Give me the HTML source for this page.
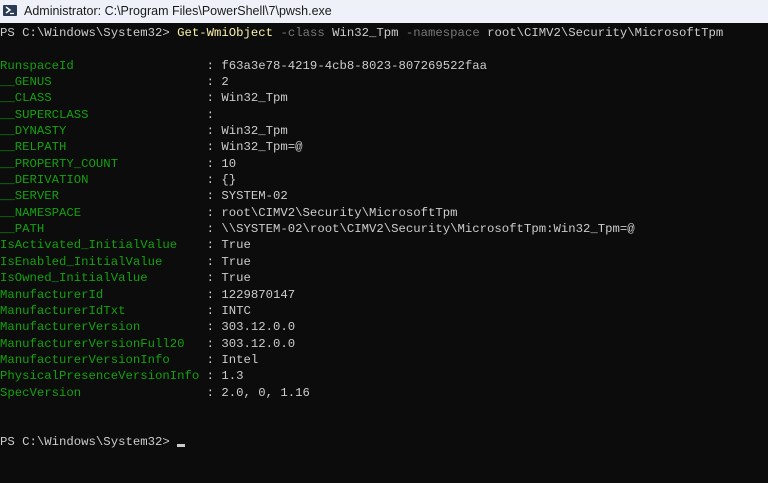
<!DOCTYPE html>
<html><head><style>
html,body{margin:0;padding:0;width:768px;height:483px;overflow:hidden;background:#0c0c0c}
.tb{position:absolute;left:0;top:0;width:768px;height:23px;background:#eef2f8;font-family:"Liberation Sans",sans-serif;font-size:12.5px;color:#1a1a1a}
.tb span{position:absolute;left:24px;top:4px}
.ic{position:absolute;left:3px;top:5px;width:14px;height:11px;background:#2b3a55;border-radius:1px}
.term{position:absolute;left:0;top:25px;font-family:"Liberation Mono",monospace;font-size:12.3px;line-height:16.35px;color:#cccccc;white-space:pre;margin:0}
.g{color:#13a10e}.y{color:#f9f1a5}.d{color:#767676}
.cur{display:inline-block;width:8px;height:3px;background:#ccc;vertical-align:-2px}
</style></head><body>
<div class="tb"><div class="ic"><svg width="14" height="11" viewBox="0 0 14 11"><path d="M3 2l4 3-4 3" stroke="#fff" stroke-width="1.5" fill="none"/><path d="M7 8.5h4" stroke="#fff" stroke-width="1.3"/></svg></div><span>Administrator: C:\Program Files\PowerShell\7\pwsh.exe</span></div>
<pre class="term">PS C:\Windows\System32&gt; <span class="y">Get-WmiObject</span> <span class="d">-class</span> Win32_Tpm <span class="d">-namespace</span> root\CIMV2\Security\MicrosoftTpm

<span class="g">RunspaceId                  </span>: f63a3e78-4219-4cb8-8023-807269522faa
<span class="g">__GENUS                     </span>: 2
<span class="g">__CLASS                     </span>: Win32_Tpm
<span class="g">__SUPERCLASS                </span>:
<span class="g">__DYNASTY                   </span>: Win32_Tpm
<span class="g">__RELPATH                   </span>: Win32_Tpm=@
<span class="g">__PROPERTY_COUNT            </span>: 10
<span class="g">__DERIVATION                </span>: {}
<span class="g">__SERVER                    </span>: SYSTEM-02
<span class="g">__NAMESPACE                 </span>: root\CIMV2\Security\MicrosoftTpm
<span class="g">__PATH                      </span>: \\SYSTEM-02\root\CIMV2\Security\MicrosoftTpm:Win32_Tpm=@
<span class="g">IsActivated_InitialValue    </span>: True
<span class="g">IsEnabled_InitialValue      </span>: True
<span class="g">IsOwned_InitialValue        </span>: True
<span class="g">ManufacturerId              </span>: 1229870147
<span class="g">ManufacturerIdTxt           </span>: INTC
<span class="g">ManufacturerVersion         </span>: 303.12.0.0
<span class="g">ManufacturerVersionFull20   </span>: 303.12.0.0
<span class="g">ManufacturerVersionInfo     </span>: Intel
<span class="g">PhysicalPresenceVersionInfo </span>: 1.3
<span class="g">SpecVersion                 </span>: 2.0, 0, 1.16


PS C:\Windows\System32&gt; <span class="cur"></span></pre>
</body></html>
